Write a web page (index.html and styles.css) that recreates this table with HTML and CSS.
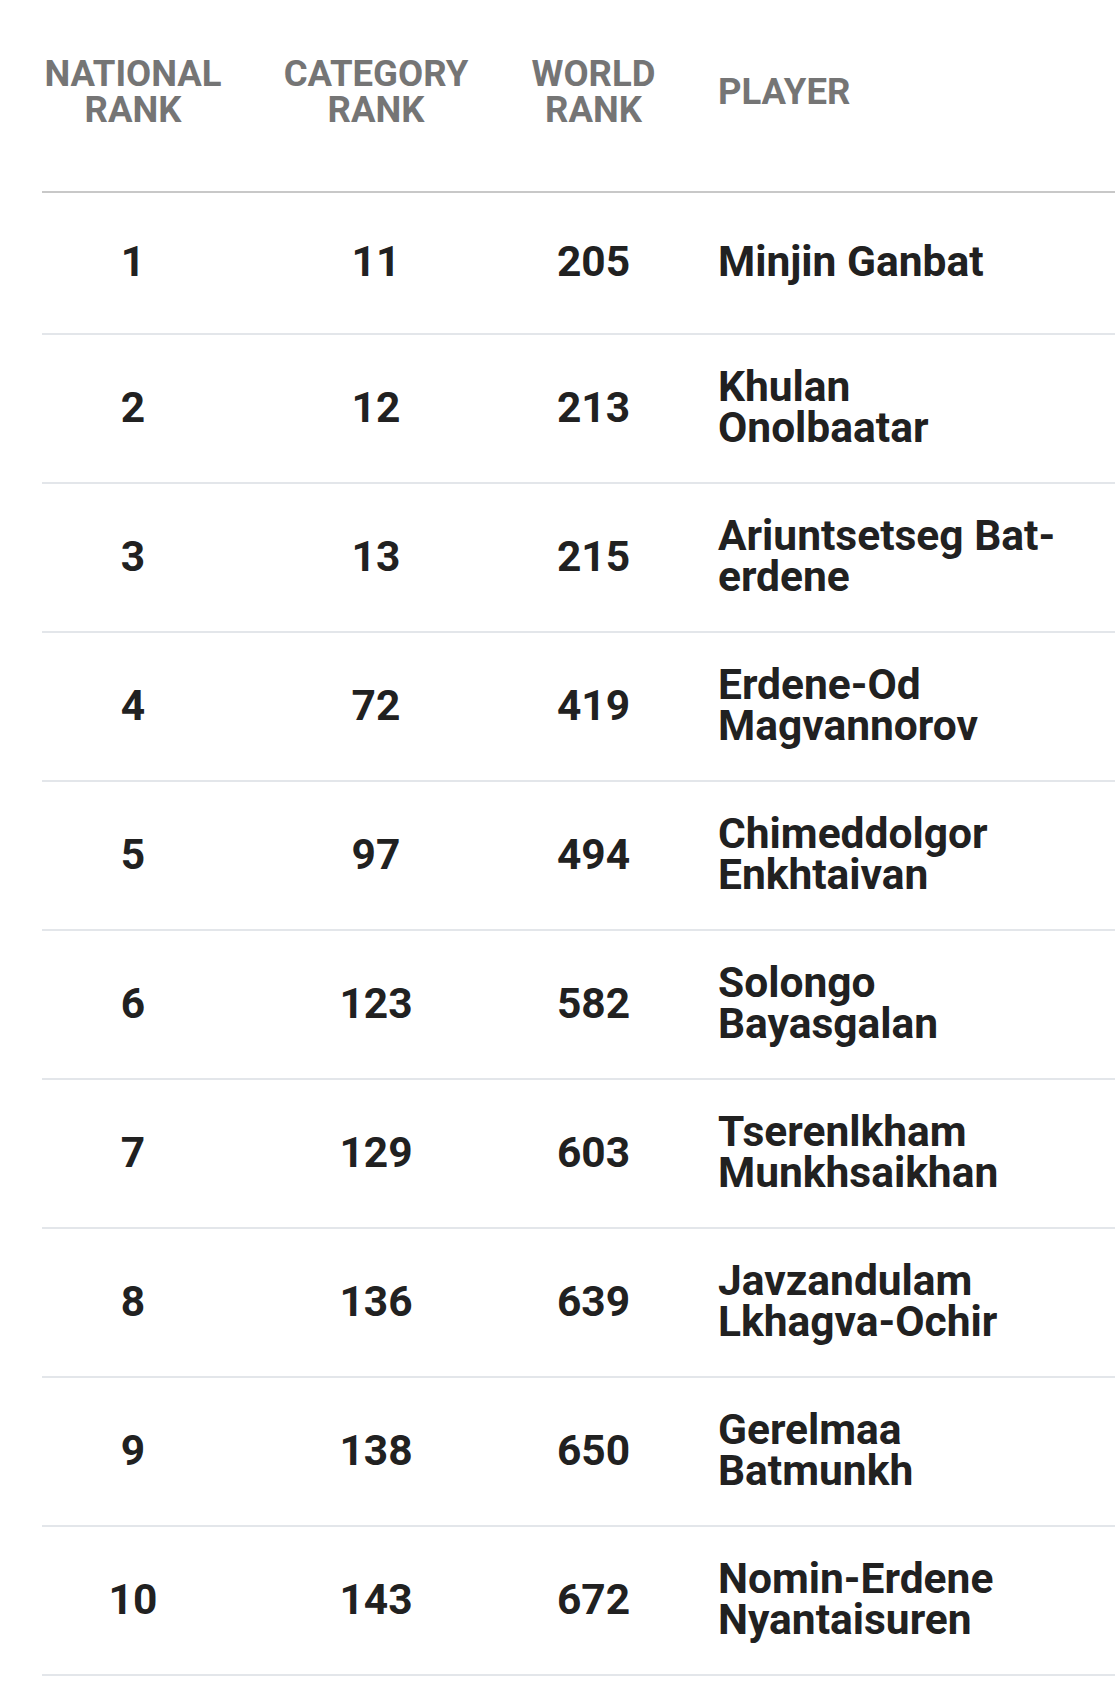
FILE: index.html
```html
<!DOCTYPE html>
<html lang="en">
<head>
<meta charset="utf-8">
<title>National Ranking</title>
<link rel="stylesheet" href="styles.css">
</head>
<body>
<div class="ranking" role="table">
  <div class="row head" role="row">
    <div class="cell center" role="columnheader">NATIONAL<br>RANK</div>
    <div class="cell center" role="columnheader">CATEGORY<br>RANK</div>
    <div class="cell center" role="columnheader">WORLD<br>RANK</div>
    <div class="cell player" role="columnheader">PLAYER</div>
  </div>
  <div class="row" role="row">
    <div class="cell center">1</div><div class="cell center">11</div><div class="cell center">205</div><div class="cell player">Minjin Ganbat</div>
  </div>
  <div class="row" role="row">
    <div class="cell center">2</div><div class="cell center">12</div><div class="cell center">213</div><div class="cell player">Khulan Onolbaatar</div>
  </div>
  <div class="row" role="row">
    <div class="cell center">3</div><div class="cell center">13</div><div class="cell center">215</div><div class="cell player">Ariuntsetseg Bat-erdene</div>
  </div>
  <div class="row" role="row">
    <div class="cell center">4</div><div class="cell center">72</div><div class="cell center">419</div><div class="cell player">Erdene-Od Magvannorov</div>
  </div>
  <div class="row" role="row">
    <div class="cell center">5</div><div class="cell center">97</div><div class="cell center">494</div><div class="cell player">Chimeddolgor Enkhtaivan</div>
  </div>
  <div class="row" role="row">
    <div class="cell center">6</div><div class="cell center">123</div><div class="cell center">582</div><div class="cell player">Solongo Bayasgalan</div>
  </div>
  <div class="row" role="row">
    <div class="cell center">7</div><div class="cell center">129</div><div class="cell center">603</div><div class="cell player">Tserenlkham Munkhsaikhan</div>
  </div>
  <div class="row" role="row">
    <div class="cell center">8</div><div class="cell center">136</div><div class="cell center">639</div><div class="cell player">Javzandulam Lkhagva-Ochir</div>
  </div>
  <div class="row" role="row">
    <div class="cell center">9</div><div class="cell center">138</div><div class="cell center">650</div><div class="cell player">Gerelmaa Batmunkh</div>
  </div>
  <div class="row" role="row">
    <div class="cell center">10</div><div class="cell center">143</div><div class="cell center">672</div><div class="cell player">Nomin-Erdene Nyantaisuren</div>
  </div>
</div>
</body>
</html>
```

FILE: styles.css
```css
html, body {
  margin: 0;
  padding: 0;
  background: #ffffff;
}

body {
  font-family: Roboto, "Liberation Sans", Arial, sans-serif;
  font-weight: 700;
  color: #212121;
  overflow: hidden;
}

.ranking {
  margin-left: 42px;
  width: calc(100% - 42px);
}

.row {
  display: grid;
  grid-template-columns: 182px 304px 131px 1fr;
  align-items: center;
  box-sizing: border-box;
  min-height: 142px;
  padding: 31px 0 34px;
  border-bottom: 2px solid #e3e6ea;
  font-size: 42.5px;
  line-height: 41px;
}

.row.head {
  height: 193px;
  min-height: 0;
  padding: 0 0 8px;
  border-bottom: 2px solid #c8c8c8;
  font-size: 36.5px;
  line-height: 36px;
  color: #757575;
}

.cell {
  min-width: 0;
}

.center {
  text-align: center;
}

.player {
  padding: 0 57px 0 59px;
  text-align: left;
}
```
